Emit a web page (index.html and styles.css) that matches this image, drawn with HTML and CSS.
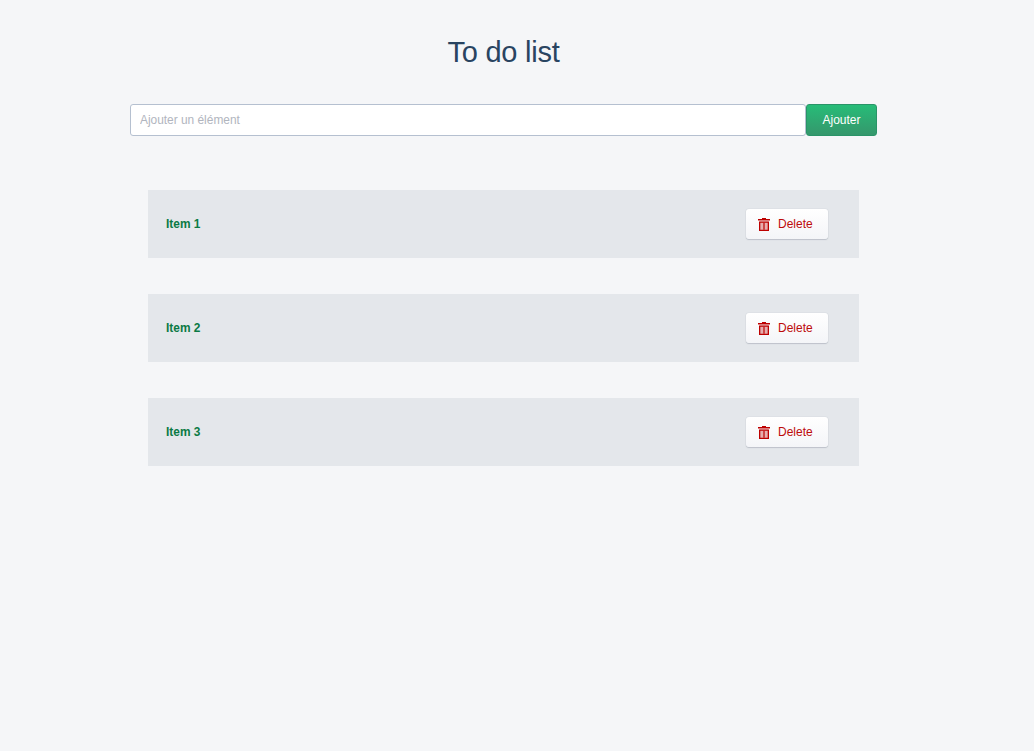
FILE: index.html
```html
<!DOCTYPE html>
<html lang="fr">
<head>
<meta charset="utf-8">
<title>To do list</title>
<link rel="stylesheet" href="styles.css">
</head>
<body>
<main class="app">
  <h1 class="title">To do list</h1>
  <form class="add-form">
    <input class="add-input" type="text" placeholder="Ajouter un élément">
    <button class="add-button" type="button">Ajouter</button>
  </form>
  <ul class="list">
    <li class="item">
      <span class="item-name">Item 1</span>
      <button class="delete" type="button">
        <svg class="trash" viewBox="0 0 12 13" aria-hidden="true"><path d="M4 0h4v1h4v1.6H0V1h4z"/><path class="trash-body" d="M1.5 3.5h9V13h-9z"/><path d="M1 3.5h10V13H1zm1.3 1.3v6.9h7.4V4.800z" fill-rule="evenodd"/><path d="M5.400 4.800h1.200v6.900H5.400z"/></svg>
        Delete
      </button>
    </li>
    <li class="item">
      <span class="item-name">Item 2</span>
      <button class="delete" type="button">
        <svg class="trash" viewBox="0 0 12 13" aria-hidden="true"><path d="M4 0h4v1h4v1.6H0V1h4z"/><path class="trash-body" d="M1.5 3.5h9V13h-9z"/><path d="M1 3.5h10V13H1zm1.3 1.3v6.9h7.4V4.800z" fill-rule="evenodd"/><path d="M5.400 4.800h1.200v6.900H5.400z"/></svg>
        Delete
      </button>
    </li>
    <li class="item">
      <span class="item-name">Item 3</span>
      <button class="delete" type="button">
        <svg class="trash" viewBox="0 0 12 13" aria-hidden="true"><path d="M4 0h4v1h4v1.6H0V1h4z"/><path class="trash-body" d="M1.5 3.5h9V13h-9z"/><path d="M1 3.5h10V13H1zm1.3 1.3v6.9h7.4V4.800z" fill-rule="evenodd"/><path d="M5.400 4.800h1.200v6.900H5.400z"/></svg>
        Delete
      </button>
    </li>
  </ul>
</main>
</body>
</html>
```

FILE: styles.css
```css
* { box-sizing: border-box; }
html, body { margin: 0; padding: 0; }
body {
  background: #f5f6f8;
  font-family: "Liberation Sans", Arial, sans-serif;
  font-size: 12px;
  min-height: 751px;
}
.app {
  width: 747px;
  margin-left: 130px;
  padding-top: 35px;
}
.title {
  margin: 0 0 35px;
  font-size: 29px;
  letter-spacing: -0.25px;
  line-height: 34px;
  font-weight: 400;
  text-align: center;
  color: #294461;
}
.add-form {
  display: flex;
  height: 32px;
  margin-bottom: 54px;
}
.add-input {
  flex: 1;
  min-width: 0;
  height: 32px;
  padding: 0 9px;
  border: 1px solid #b5c0d0;
  border-radius: 3px;
  background: #fff;
  font: 11.9px "Liberation Sans", Arial, sans-serif;
  color: #333;
  outline: none;
}
.add-input::placeholder { color: #b1b5be; opacity: 1; }
.add-button {
  width: 71px;
  height: 32px;
  padding: 0;
  border: 1px solid #2a9468;
  border-radius: 3px;
  background: linear-gradient(#27bc78, #35976c);
  font: 12px "Liberation Sans", Arial, sans-serif;
  color: #fff;
}
.list {
  list-style: none;
  margin: 0;
  padding: 0 18px;
  display: flex;
  flex-direction: column;
  gap: 36px;
}
.item {
  display: flex;
  align-items: center;
  justify-content: space-between;
  height: 68px;
  padding: 0 31px 0 18px;
  background: #e4e7eb;
}
.item-name {
  font-size: 11.9px;
  font-weight: 700;
  color: #0b7a45;
}
.delete {
  display: flex;
  align-items: center;
  gap: 8px;
  width: 82px;
  height: 30px;
  padding: 0 0 0 12px;
  border: 0;
  border-radius: 3px;
  background: linear-gradient(#fff, #f4f5f8);
  box-shadow: 0 0 1px rgba(90, 100, 120, .35), 0 1px 1px rgba(90, 100, 120, .25);
  font: 12px "Liberation Sans", Arial, sans-serif;
  color: #bd0a0a;
}
.trash {
  width: 12px;
  height: 13px;
  fill: #bd0000;
  flex: none;
}
.trash-body { opacity: .3; }
```
